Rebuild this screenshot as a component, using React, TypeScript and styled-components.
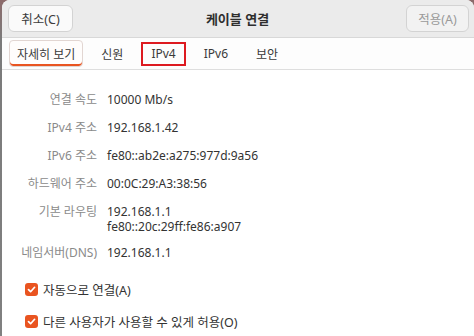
import React from "react";
import styled, { createGlobalStyle } from "styled-components";

const GlobalStyle = createGlobalStyle`
  html, body { margin: 0; padding: 0; }
  body {
    width: 474px;
    height: 336px;
    overflow: hidden;
    background: linear-gradient(180deg, #8c6a6a 0px, #7b7b7b 40px, #808080 100%);
    font-family: "Noto Sans", "Noto Sans CJK KR", sans-serif;
  }
`;

const Window = styled.div`
  margin-left: 2px;
  width: 472px;
  height: 336px;
  background: #ffffff;
  border-radius: 8px 8px 0 0;
  overflow: hidden;
  display: flex;
  flex-direction: column;
`;

const HeaderBar = styled.header`
  height: 37px;
  flex: none;
  background: #ebebeb;
  border-bottom: 1px solid #d8d8d8;
  display: grid;
  grid-template-columns: 1fr auto 1fr;
  align-items: center;
  padding: 0 5px 0 4px;
`;

const HeaderButton = styled.button<{ $disabled?: boolean; $end?: boolean }>`
  justify-self: ${(p) => (p.$end ? "end" : "start")};
  margin-left: ${(p) => (p.$end ? "0" : "2px")};
  height: 27px;
  width: ${(p) => (p.$end ? "63px" : "65px")};
  border: 1px solid #d3d3d3;
  border-radius: 6px;
  background: ${(p) => (p.$disabled ? "#f2f2f2" : "#fafafa")};
  color: ${(p) => (p.$disabled ? "#9a9a9a" : "#3c3c3c")};
  font-family: "Noto Sans", "Noto Sans CJK KR", sans-serif;
  font-size: 12.5px;
  padding: 0;
`;

const Title = styled.h1`
  margin: 0;
  font-size: 13px;
  font-weight: 700;
  color: #2e2e2e;
`;

const TabBar = styled.nav`
  height: 31px;
  flex: none;
  border-bottom: 1px solid #dedede;
  display: flex;
  align-items: center;
  padding-left: 7px;
  gap: 8px;
  background: #fdfdfd;
`;

const Tab = styled.div<{ $active?: boolean; $marked?: boolean }>`
  box-sizing: border-box;
  height: ${(p) => (p.$marked ? "24px" : "27px")};
  display: flex;
  align-items: center;
  padding: 0 ${(p) => (p.$marked ? "8px" : p.$active ? "7px" : "9px")};
  font-size: 12px;
  color: #3a3a3a;
  border: ${(p) =>
    p.$marked ? "2px solid #dd1a20" : p.$active ? "1px solid #e2d6d2" : "1px solid transparent"};
  border-radius: ${(p) => (p.$marked ? "0" : "4px")};
  box-shadow: ${(p) => (p.$active ? "inset 0 -2px 0 #e95420" : "none")};
  background: ${(p) => (p.$active ? "#fffdfc" : "transparent")};
`;

const Body = styled.main`
  flex: 1;
  display: flex;
  flex-direction: column;
  padding: 20px 0 0 0;
`;

const InfoGrid = styled.dl`
  margin: 0;
  display: grid;
  grid-template-columns: 95px 1fr;
  column-gap: 10px;
  row-gap: 8px;
`;

const Label = styled.dt`
  margin: 0;
  text-align: right;
  font-size: 12px;
  line-height: 20px;
  color: #8a8a8a;
`;

const Value = styled.dd<{ $multi?: boolean }>`
  margin: 0;
  font-size: 12px;
  color: #333333;
  line-height: ${(p) => (p.$multi ? "15px" : "20px")};
  padding: ${(p) => (p.$multi ? "2px 0 1px" : "0")};
  display: flex;
  flex-direction: column;
`;

const Checks = styled.div`
  margin-top: 16px;
  padding-left: 23px;
  display: flex;
  flex-direction: column;
  gap: 12px;
`;

const CheckRow = styled.label`
  display: flex;
  align-items: center;
  gap: 5px;
  height: 20px;
  font-size: 12.5px;
  color: #333333;
`;

const Box = styled.span`
  width: 13px;
  height: 13px;
  border-radius: 3px;
  background: #e95420;
  display: flex;
  align-items: center;
  justify-content: center;
`;

const rows: { label: string; values: string[] }[] = [
  { label: "연결 속도", values: ["10000 Mb/s"] },
  { label: "IPv4 주소", values: ["192.168.1.42"] },
  { label: "IPv6 주소", values: ["fe80::ab2e:a275:977d:9a56"] },
  { label: "하드웨어 주소", values: ["00:0C:29:A3:38:56"] },
  { label: "기본 라우팅", values: ["192.168.1.1", "fe80::20c:29ff:fe86:a907"] },
  { label: "네임서버(DNS)", values: ["192.168.1.1"] },
];

const Check = () => (
  <Box>
    <svg width="9" height="9" viewBox="0 0 9 9">
      <path d="M1.5 4.6 L3.6 6.7 L7.6 2.3" fill="none" stroke="#fff" strokeWidth="1.7" strokeLinecap="round" strokeLinejoin="round" />
    </svg>
  </Box>
);

export default function App() {
  return (
    <>
      <GlobalStyle />
      <Window>
        <HeaderBar>
          <HeaderButton>취소(C)</HeaderButton>
          <Title>케이블 연결</Title>
          <HeaderButton $end $disabled>
            적용(A)
          </HeaderButton>
        </HeaderBar>
        <TabBar>
          <Tab $active>자세히 보기</Tab>
          <Tab>신원</Tab>
          <Tab $marked>IPv4</Tab>
          <Tab>IPv6</Tab>
          <Tab>보안</Tab>
        </TabBar>
        <Body>
          <InfoGrid>
            {rows.map((r) => (
              <React.Fragment key={r.label}>
                <Label>{r.label}</Label>
                <Value $multi={r.values.length > 1}>
                  {r.values.map((v) => (
                    <span key={v}>{v}</span>
                  ))}
                </Value>
              </React.Fragment>
            ))}
          </InfoGrid>
          <Checks>
            <CheckRow>
              <Check />
              자동으로 연결(A)
            </CheckRow>
            <CheckRow>
              <Check />
              다른 사용자가 사용할 수 있게 허용(O)
            </CheckRow>
          </Checks>
        </Body>
      </Window>
    </>
  );
}
